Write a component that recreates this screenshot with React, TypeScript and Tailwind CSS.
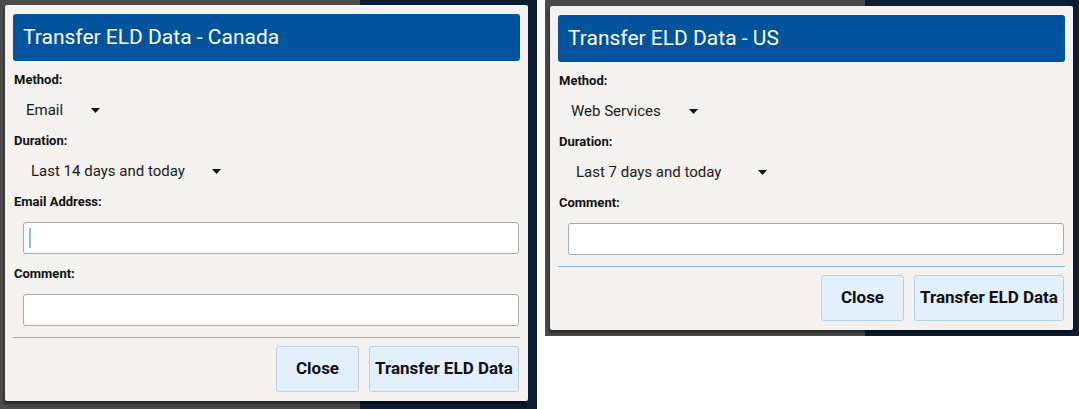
import React from "react";

const font = { fontFamily: "Roboto, 'Noto Sans', sans-serif" };

function Caret() {
  return (
    <svg width="9" height="5" viewBox="0 0 9 5" className="shrink-0">
      <path d="M0 0 L9 0 L4.5 5 Z" fill="#111" />
    </svg>
  );
}

function Spinner({ value, indent, gap }: { value: string; indent: string; gap: string }) {
  return (
    <div className={`h-[43px] flex items-center ${indent}`}>
      <span className="text-[15px] text-[#1a1a1a]">{value}</span>
      <span className={gap}>
        <Caret />
      </span>
    </div>
  );
}

function Label({ text }: { text: string }) {
  return <div className="h-[18px] flex items-center pl-px text-[13px] font-bold text-[#111]">{text}</div>;
}

function Field({ cursor }: { cursor?: boolean }) {
  return (
    <div className="ml-[10px] mr-px h-[32px] bg-white border border-[#a7abae] rounded-[3px] flex items-center pl-[5px]">
      {cursor && <div className="w-[2px] h-[20px] bg-[#7cc8c2]" />}
    </div>
  );
}

function Dialog({ canada }: { canada: boolean }) {
  return (
    <div className="w-[523px] bg-[#f4f1ee] rounded-[2px] px-[8px] pt-[9px] pb-[9px] shadow-[-1px_3px_3px_rgba(0,0,0,0.45)]">
      <div className="h-[47px] bg-[#02539d] rounded-[3px] flex items-center pl-[10px] text-white text-[21px]">
        Transfer ELD Data - {canada ? "Canada" : "US"}
      </div>
      <div className="mt-[10px]">
        <Label text="Method:" />
        <Spinner value={canada ? "Email" : "Web Services"} indent="pl-[13px]" gap="ml-[28px]" />
        <Label text="Duration:" />
        <Spinner
          value={canada ? "Last 14 days and today" : "Last 7 days and today"}
          indent="pl-[18px]"
          gap={canada ? "ml-[27px]" : "ml-[37px]"}
        />
        {canada && (
          <>
            <Label text="Email Address:" />
            <div className="mt-[11px]">
              <Field cursor />
            </div>
            <div className="mt-[11px]">
              <Label text="Comment:" />
            </div>
          </>
        )}
        {!canada && <Label text="Comment:" />}
        <div className="mt-[11px]">
          <Field />
        </div>
        <div className="mt-[11px] h-px bg-[#8fb6d2]" />
        <div className="mt-[8px] flex justify-end gap-[10px] mr-px">
          <button className="w-[83px] h-[46px] bg-[#e2f0fc] border border-[#b3d0e8] rounded-[3px] text-[17px] font-bold text-[#111]">
            Close
          </button>
          <button className="w-[150px] h-[46px] bg-[#e2f0fc] border border-[#b3d0e8] rounded-[3px] text-[17px] font-bold text-[#111]">
            Transfer ELD Data
          </button>
        </div>
      </div>
    </div>
  );
}

export default function App() {
  return (
    <div className="w-[1079px] h-[409px] bg-white flex items-start gap-[8px]" style={font}>
      <div className="w-[537px] h-[409px] pl-[5px] pt-[5px] bg-[linear-gradient(to_right,#4b4b4b_0%,#4b4b4b_67%,#0c1d33_67%)]">
        <Dialog canada />
      </div>
      <div className="w-[534px] h-[336px] pl-[5px] pt-[6px] bg-[linear-gradient(to_right,#4a4a4a_0%,#4a4a4a_60%,#0c1d33_60%)]">
        <Dialog canada={false} />
      </div>
    </div>
  );
}
